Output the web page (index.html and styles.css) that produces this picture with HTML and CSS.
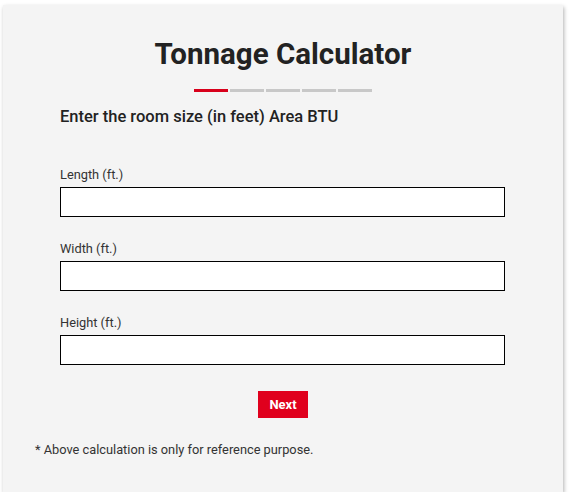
FILE: index.html
```html
<!DOCTYPE html>
<html lang="en">
<head>
<meta charset="utf-8">
<title>Tonnage Calculator</title>
<link rel="stylesheet" href="styles.css">
</head>
<body>
<div class="card">
  <h1 class="title">Tonnage Calculator</h1>
  <div class="steps">
    <span class="step active"></span>
    <span class="step"></span>
    <span class="step"></span>
    <span class="step"></span>
    <span class="step"></span>
  </div>
  <div class="form">
    <h2 class="subtitle">Enter the room size (in feet) Area BTU</h2>
    <div class="fields">
      <div class="field">
        <label class="label" for="len">Length (ft.)</label>
        <input class="input" id="len" type="text">
      </div>
      <div class="field">
        <label class="label" for="wid">Width (ft.)</label>
        <input class="input" id="wid" type="text">
      </div>
      <div class="field">
        <label class="label" for="hgt">Height (ft.)</label>
        <input class="input" id="hgt" type="text">
      </div>
    </div>
  </div>
  <div class="actions">
    <button class="btn" type="button">Next</button>
  </div>
  <p class="note">* Above calculation is only for reference purpose.</p>
</div>
</body>
</html>
```
FILE: styles.css
```css
* { box-sizing: border-box; }
html, body { margin: 0; padding: 0; background: #ffffff; }
body { font-family: Roboto, "Noto Sans", Arial, sans-serif; color: #222; }

.card {
  margin: 5px 0 0 3px;
  width: 560px;
  height: 487px;
  background: #f4f4f4;
  box-shadow: 1px 2px 4px rgba(0,0,0,0.3);
  padding-top: 31px;
  display: flex;
  flex-direction: column;
}

.title {
  margin: 0;
  font-size: 29.5px;
  line-height: 36px;
  font-weight: 700;
  text-align: center;
  color: #222;
}

.steps {
  margin-top: 17px;
  display: flex;
  justify-content: center;
  gap: 2px;
}
.step { width: 34px; height: 3px; background: #c8c8c8; }
.step.active { background: #d8001b; }

.form { padding-left: 57px; }

.subtitle {
  margin: 15px 0 0;
  font-size: 16.5px;
  line-height: 20px;
  font-weight: 500;
  color: #222;
}

.fields {
  margin-top: 40px;
  display: flex;
  flex-direction: column;
  gap: 24px;
}
.field { display: flex; flex-direction: column; }
.label {
  font-size: 12.8px;
  line-height: 16px;
  color: #333;
  margin-bottom: 4px;
}
.input {
  width: 445px;
  height: 30px;
  border: 1px solid #000;
  background: #fff;
  border-radius: 0;
  padding: 0 6px;
  font-family: inherit;
  font-size: 13px;
  outline: none;
}

.actions {
  margin-top: 26px;
  display: flex;
  justify-content: center;
}
.btn {
  height: 27px;
  padding: 0 11px;
  border: 0;
  border-radius: 0;
  background: #e0001d;
  color: #fff;
  font-family: inherit;
  font-size: 13px;
  font-weight: 700;
  cursor: pointer;
}

.note {
  margin: 24px 0 0 32px;
  font-size: 12.8px;
  line-height: 16px;
  color: #333;
}
```
